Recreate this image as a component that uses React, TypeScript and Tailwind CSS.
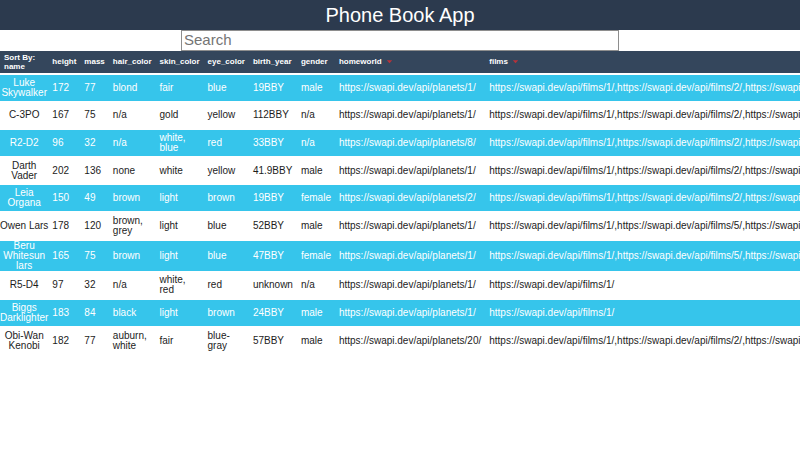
const films = (ids: number[]) => ids.map((i) => `https://swapi.dev/api/films/${i}/`).join(",");
const planet = (i: number) => `https://swapi.dev/api/planets/${i}/`;

const people = [
  ["Luke Skywalker", "172", "77", "blond", "fair", "blue", "19BBY", "male", planet(1), films([1, 2, 3, 6])],
  ["C-3PO", "167", "75", "n/a", "gold", "yellow", "112BBY", "n/a", planet(1), films([1, 2, 3, 4, 5, 6])],
  ["R2-D2", "96", "32", "n/a", "white, blue", "red", "33BBY", "n/a", planet(8), films([1, 2, 3, 4, 5, 6])],
  ["Darth Vader", "202", "136", "none", "white", "yellow", "41.9BBY", "male", planet(1), films([1, 2, 3, 6])],
  ["Leia Organa", "150", "49", "brown", "light", "brown", "19BBY", "female", planet(2), films([1, 2, 3, 6])],
  ["Owen Lars", "178", "120", "brown, grey", "light", "blue", "52BBY", "male", planet(1), films([1, 5, 6])],
  ["Beru Whitesun lars", "165", "75", "brown", "light", "blue", "47BBY", "female", planet(1), films([1, 5, 6])],
  ["R5-D4", "97", "32", "n/a", "white, red", "red", "unknown", "n/a", planet(1), films([1])],
  ["Biggs Darklighter", "183", "84", "black", "light", "brown", "24BBY", "male", planet(1), films([1])],
  ["Obi-Wan Kenobi", "182", "77", "auburn, white", "fair", "blue-gray", "57BBY", "male", planet(20), films([1, 2, 3, 4, 5, 6])],
];

const columns = ["height", "mass", "hair_color", "skin_color", "eye_color", "birth_year", "gender"];

const SortArrow = () => (
  <svg viewBox="0 0 8 8" className="inline-block w-[7px] h-[7px] ml-1 align-middle">
    <path d="M1 2.5 L4 6 L7 2.5 Z" fill="#b8323a" />
  </svg>
);

const App = () => {
  return (
    <div className="w-[800px] h-[450px] overflow-hidden bg-white" style={{ fontFamily: '"Liberation Sans", Arial, sans-serif' }}>
      <div className="h-[30px] bg-[#2c3a4e] flex items-center justify-center">
        <h1 className="text-[20px] text-white leading-none">Phone Book App</h1>
      </div>

      <div className="flex justify-center">
        <input
          placeholder="Search"
          className="w-[438px] h-[21px] border border-[#8e8e8e] px-[2px] text-[15px] placeholder:text-[#757575] outline-none"
        />
      </div>

      <table className="w-full border-separate border-spacing-x-0 border-spacing-y-0.5 -mt-0.5 text-[10px] leading-[10px]">
        <thead>
          <tr className="bg-[#34465c] text-white h-[22px]">
            <th className="pl-1 text-left font-bold text-[8px] leading-[9px]">
              Sort By:
              <br />
              name
            </th>
            {columns.map((c) => (
              <th key={c} className="px-1 text-left font-bold text-[8px]">
                {c}
              </th>
            ))}
            <th className="px-1 text-left font-bold text-[8px]">
              homeworld
              <SortArrow />
            </th>
            <th className="px-1 text-left font-bold text-[8px]">
              films
              <SortArrow />
            </th>
          </tr>
        </thead>
        <tbody>
          {people.map((p, i) => (
            <tr key={p[0]} className={i % 2 === 0 ? "bg-[#36c5eb] text-white h-[25.6px]" : "text-[#1c1c1c] h-[25.6px]"}>
              <td className="text-center align-middle">{p[0]}</td>
              {p.slice(1).map((v, j) => (
                <td key={j} className="px-1 align-middle">
                  {v}
                </td>
              ))}
            </tr>
          ))}
        </tbody>
      </table>
    </div>
  );
};

export default App;
